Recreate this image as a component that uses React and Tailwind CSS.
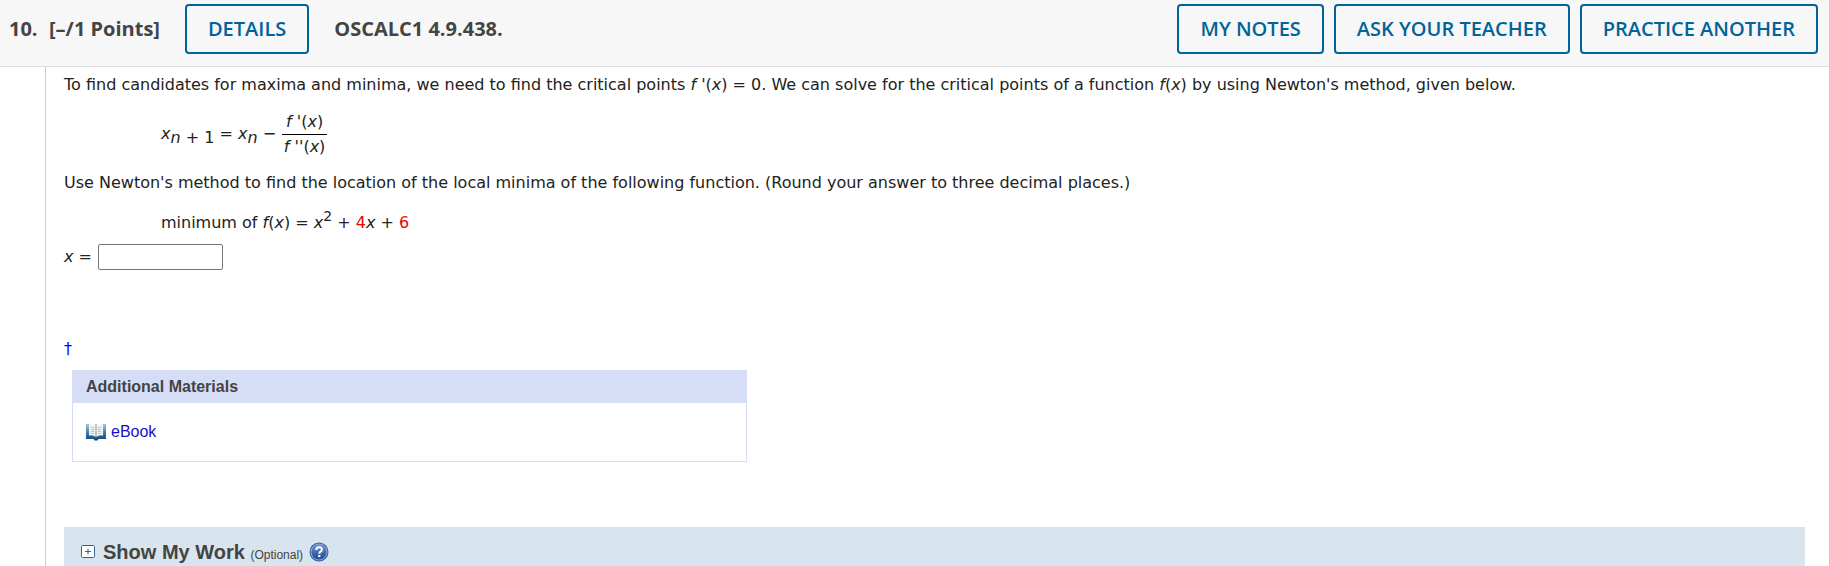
import { useState } from "react";

const actions = ["MY NOTES", "ASK YOUR TEACHER", "PRACTICE ANOTHER"];

function HeaderButton({ children }) {
    return (
        <button
            type="button"
            className="h-[50px] px-[21px] border-2 border-[#00639a] rounded bg-[#f7f7f7] text-[#00639a] text-xl font-semibold whitespace-nowrap"
        >
            {children}
        </button>
    );
}

function BookIcon() {
    return (
        <svg width="20" height="18" viewBox="0 0 20 18" aria-hidden="true">
            <defs>
                <linearGradient id="cover" x1="0" y1="0" x2="0" y2="1">
                    <stop offset="0" stopColor="#a9cbe2" />
                    <stop offset="0.5" stopColor="#3f7dac" />
                    <stop offset="1" stopColor="#0f4677" />
                </linearGradient>
            </defs>
            <path d="M0 1h20v15h-7.500l-1 1.500h-3l-1-1.500H0z" fill="url(#cover)" />
            <path d="M3 1.500q4-1.500 7 0.500q3-2 7-0.500v11q-4-1-7 1.500q-3-2.500-7-1.500z" fill="#f8f8f5" />
            <path d="M10 2v12" stroke="#8795a0" strokeWidth="1" />
            <path d="M4.500 4l4 0.700M4.500 6l4 0.700M4.500 8l4 0.700M4.500 10l4 0.700M15.500 4l-4 0.700M15.500 6l-4 0.700M15.500 8l-4 0.700M15.500 10l-4 0.700" stroke="#b4b4b0" strokeWidth="0.9" />
        </svg>
    );
}

function ExpandIcon() {
    return (
        <svg width="14" height="14" viewBox="0 0 14 14" aria-hidden="true">
            <rect x="0.5" y="0.5" width="13" height="12" rx="1" fill="#fff" stroke="#336699" />
            <path d="M4 6.500h6M7 3.500v6" stroke="#336699" strokeWidth="1" />
        </svg>
    );
}

function HelpIcon() {
    return (
        <svg width="20" height="20" viewBox="0 0 20 20" aria-hidden="true">
            <defs>
                <linearGradient id="help" x1="0" y1="0" x2="0" y2="1">
                    <stop offset="0" stopColor="#6f93d0" />
                    <stop offset="1" stopColor="#1f458f" />
                </linearGradient>
            </defs>
            <circle cx="10" cy="10" r="9.500" fill="#3a5fa5" />
            <circle cx="10" cy="10" r="8" fill="url(#help)" stroke="#8fa9d6" strokeWidth="1" />
            <path d="M7.200 8q0-2.800 2.900-2.800q2.800 0 2.800 2.300q0 1.300-1.400 2.200q-1.200 0.800-1.200 2" fill="none" stroke="#fff" strokeWidth="2" />
            <rect x="9.200" y="13" width="2.200" height="2.200" fill="#fff" />
        </svg>
    );
}

export default function App() {
    const [answer, setAnswer] = useState("");

    return (
        <div className="min-h-screen flex flex-col bg-white border-r border-[#cccccc]">
            <header className="flex items-start justify-between pt-1 pb-3 pl-[9px] pr-[11px] bg-[#f7f7f7] border-b border-[#dddddd] font-['Open_Sans',sans-serif]">
                <div className="flex items-center text-xl font-bold text-[#444444]">
                    <span className="w-10">10.</span>
                    <span className="mr-[25px]">[–/1 Points]</span>
                    <HeaderButton>DETAILS</HeaderButton>
                    <h1 className="ml-[25px]">OSCALC1 4.9.438.</h1>
                </div>
                <div className="flex gap-[10px]">
                    {actions.map(action => (
                        <HeaderButton key={action}>{action}</HeaderButton>
                    ))}
                </div>
            </header>

            <main className="flex-1 flex flex-col ml-[45px] border-l border-[#cccccc] pl-[18px] pr-6 pt-2 font-[Verdana,'DejaVu_Sans',sans-serif] text-base leading-5 text-[#222222]">
                <p>
                    To find candidates for maxima and minima, we need to find the critical points{" "}
                    <i>f '</i>(<i>x</i>) = 0. We can solve for the critical points of a function{" "}
                    <i>f</i>(<i>x</i>) by using Newton's method, given below.
                </p>

                <div className="flex items-center mt-4 ml-[97px] h-[46px]">
                    <span className="mr-[6px]">
                        <i>x</i><sub className="text-base"><i>n</i> + 1</sub> = <i>x</i><sub className="text-base"><i>n</i></sub> −
                    </span>
                    <span className="flex flex-col text-center leading-6">
                        <span className="border-b border-black px-1"><i>f '</i>(<i>x</i>)</span>
                        <span><i>f ''</i>(<i>x</i>)</span>
                    </span>
                </div>

                <p className="mt-4">
                    Use Newton's method to find the location of the local minima of the following function. (Round your answer to three decimal places.)
                </p>

                <p className="mt-5 ml-[97px]">
                    minimum of <i>f</i>(<i>x</i>) = <i>x</i><sup className="text-sm leading-none">2</sup> + <span className="text-[#ee0000]">4</span><i>x</i> + <span className="text-[#ee0000]">6</span>
                </p>

                <div className="flex items-center mt-[11px]">
                    <label htmlFor="answer" className="mr-[6px]"><i>x</i> =</label>
                    <input
                        id="answer"
                        type="text"
                        value={answer}
                        onChange={(e) => setAnswer(e.target.value)}
                        className="w-[125px] h-[26px] px-1 border border-[#767676] rounded-xs bg-white"
                    />
                </div>

                <a href="#footnote" className="self-start mt-[69px] text-base leading-5 text-[#0000ff]">†</a>

                <section className="mt-[11px] ml-2 w-full max-w-[675px] border border-[#d6def7] font-['Liberation_Sans',sans-serif]">
                    <h2 className="bg-[#d6def7] px-[13px] py-[6px] font-bold text-[#444444]">Additional Materials</h2>
                    <a href="#ebook" className="flex items-center gap-[5px] px-[13px] py-[19px] text-[#1a0dcc]">
                        <BookIcon />
                        eBook
                    </a>
                </section>

                <section className="flex-1 mt-[65px] px-[17px] pt-[13px] bg-[#d9e5ee] font-['Liberation_Sans',sans-serif] text-[#444444]">
                    <div className="flex items-center">
                        <button type="button" aria-label="Expand"><ExpandIcon /></button>
                        <h2 className="ml-2 text-xl leading-6 font-bold">
                            Show My Work <small className="text-xs font-normal">(Optional)</small>
                        </h2>
                        <button type="button" aria-label="Help" className="ml-[6px]"><HelpIcon /></button>
                    </div>
                </section>
            </main>
        </div>
    );
}
